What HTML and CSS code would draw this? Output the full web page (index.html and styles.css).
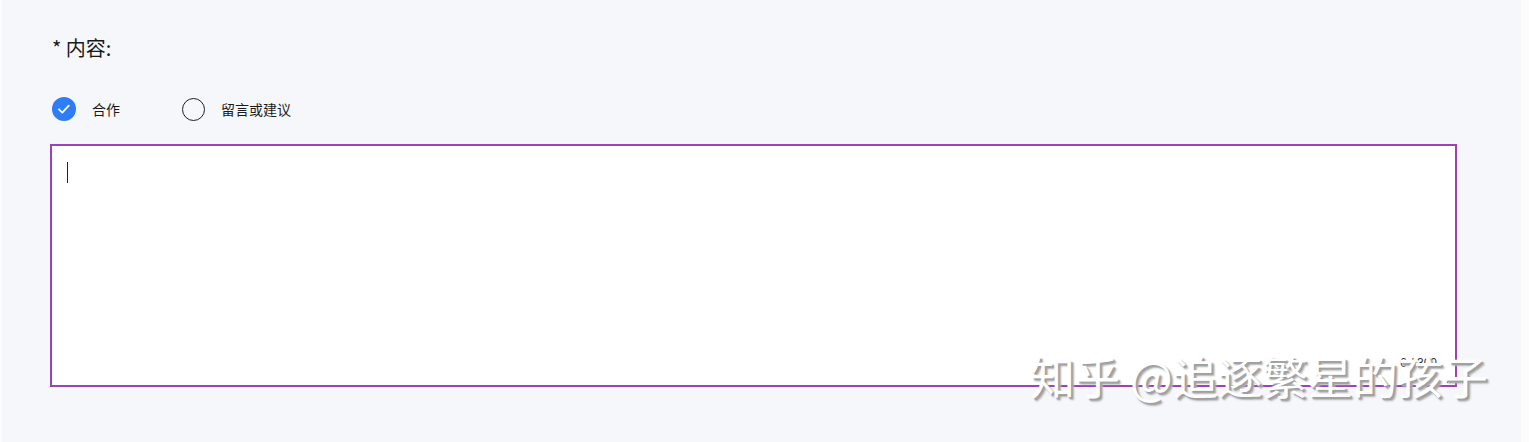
FILE: index.html
```html
<!DOCTYPE html>
<html lang="zh">
<head>
<meta charset="utf-8">
<link rel="stylesheet" href="styles.css">
</head>
<body>
<div class="page">
  <div class="form">
    <div class="label">* 内容:</div>
    <div class="radios">
      <div class="radio">
        <span class="dot checked">
          <svg width="24" height="24" viewBox="0 0 24 24"><path d="M7 12.3l3.3 3.3 6.5-7" fill="none" stroke="#fff" stroke-width="1.8" stroke-linecap="round" stroke-linejoin="round"/></svg>
        </span>
        <span class="rtext">合作</span>
      </div>
      <div class="radio">
        <span class="dot"></span>
        <span class="rtext">留言或建议</span>
      </div>
    </div>
    <div class="area">
      <span class="caret"></span>
      <span class="count">0 / 300</span>
      <svg class="grip" width="9" height="9" viewBox="0 0 9 9"><path d="M8 2L2 8M8 5L5 8" stroke="#555" stroke-width="1"/></svg>
    </div>
  </div>
  <div class="watermark">知乎 @追逐繁星的孩子</div>
</div>
</body>
</html>
```
FILE: styles.css
```css
html, body {
  margin: 0;
  padding: 0;
  background: #fcfcfd;
}
body {
  font-family: "Noto Sans CJK SC", "Noto Sans", sans-serif;
  color: #1a1a1a;
}
.page {
  position: relative;
  margin-left: 2px;
  width: 1519px;
  height: 442px;
  background: #f6f7fb;
  overflow: hidden;
}
.form {
  padding: 34px 0 0 48px;
}
.label {
  font-size: 20px;
  line-height: 28px;
  padding-left: 2px;
}
.radios {
  display: flex;
  align-items: center;
  margin-top: 33px;
  height: 28px;
}
.radio {
  display: flex;
  align-items: center;
  width: 128px;
  padding-left: 2px;
}
.dot {
  width: 21px;
  height: 21px;
  border: 1.5px solid #1f1f1f;
  border-radius: 50%;
  display: inline-flex;
  align-items: center;
  justify-content: center;
  box-sizing: content-box;
}
.dot.checked {
  width: 24px;
  height: 24px;
  border: none;
  background: #2e7cf6;
}
.rtext {
  font-size: 14px;
  margin-left: 16px;
  line-height: 20px;
}
.area {
  position: relative;
  margin-top: 21px;
  width: 1403px;
  height: 239px;
  border: 2px solid #9a42b6;
  background: #fff;
}
.caret {
  position: absolute;
  left: 15px;
  top: 16px;
  width: 1px;
  height: 21px;
  background: #222;
}
.count {
  position: absolute;
  right: 18px;
  bottom: 15px;
  font-family: "Liberation Sans", sans-serif;
  font-size: 12px;
  color: #333;
}
.grip {
  position: absolute;
  right: 1px;
  bottom: 1px;
}
.watermark {
  position: absolute;
  left: 1028px;
  top: 346px;
  font-size: 45px;
  line-height: 60px;
  color: #fff;
  white-space: nowrap;
  text-shadow: 2px 2px 1px #a0a0a0, 3px 3px 2px #b5b5b5;
}
```
